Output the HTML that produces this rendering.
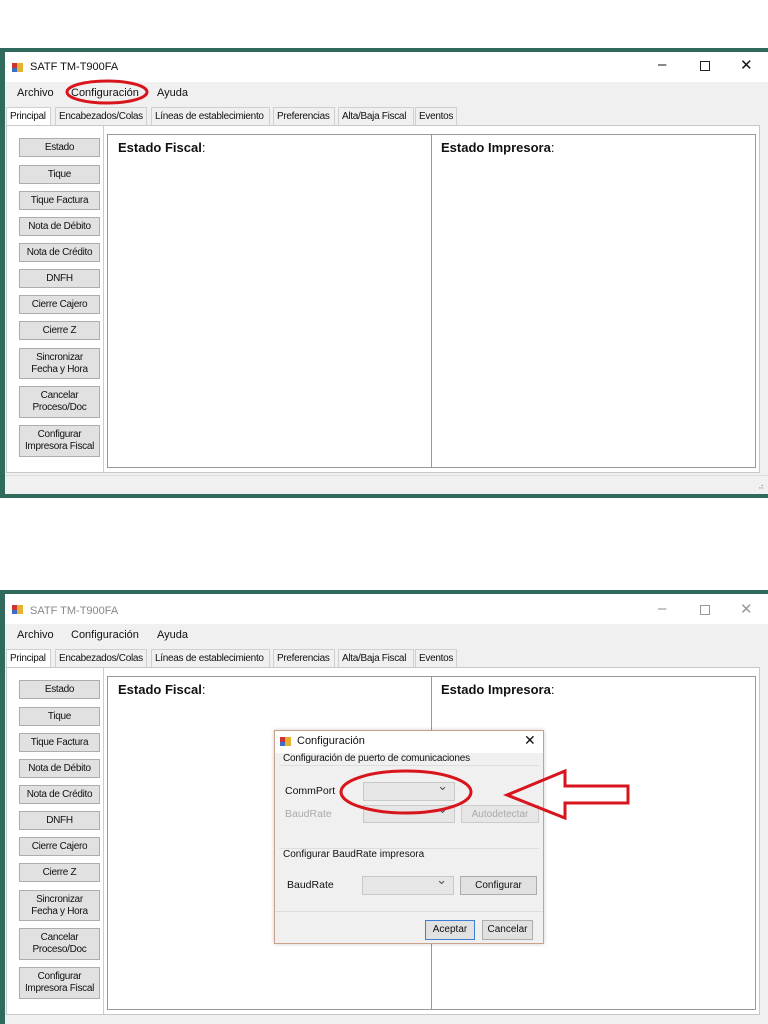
<!DOCTYPE html>
<html><head><meta charset="utf-8"><style>
*{margin:0;padding:0;box-sizing:border-box}
html{width:768px;height:1024px;overflow:hidden}
body{width:768px;height:1024px;background:#fff;position:relative;overflow:hidden;font-family:"Liberation Sans",sans-serif;font-size:10.5px;color:#111}
.a{position:absolute}
.win{position:absolute;left:0;width:768px;height:450px;background:#2f6a5c}
.in{position:absolute;left:5px;top:4px;right:0;bottom:4px;background:#f0f0f0}
.tb{position:absolute;left:0;top:0;right:0;height:30px;background:#fff}
.btn{position:absolute;left:14px;width:81px;background:#e1e1e1;border:1px solid #adadad;text-align:center;font-size:10px;line-height:12px;display:flex;align-items:center;justify-content:center;letter-spacing:-.3px}
.tab{position:absolute;top:0;height:18px;border:1px solid #d0d0d0;border-bottom:none;background:#f0f0f0;font-size:10px;line-height:17px;padding-left:3px;letter-spacing:-.3px}
.ico{position:absolute;width:11px;height:9px}
.ico i{position:absolute;display:block}
.cb{position:absolute;background:#e6e6e6;border:1px solid #c8c8c8}
.cb:after{content:"⌄";position:absolute;right:6px;top:-5px;font-size:13px;color:#555}
.db{position:absolute;background:#e1e1e1;border:1px solid #adadad;text-align:center;font-size:10px;line-height:17px}
</style></head><body>

<!-- window 1 -->
<div class="win" style="top:48px">
<div class="in">
 <div class="tb">
  <div class="ico" style="left:7px;top:11px"><i style="left:0;top:0;width:5px;height:5px;background:#c33"></i><i style="left:5px;top:0;width:6px;height:9px;background:#e8b030"></i><i style="left:0;top:5px;width:5px;height:4px;background:#3a6fc9"></i></div>
  <div class="a" style="left:25px;top:9px;font-size:11px">SATF TM-T900FA</div>
  <div class="a" style="left:653px;top:4px;font-size:15px">–</div>
  <div class="a" style="left:695px;top:9px;width:10px;height:10px;border:1px solid #222"></div>
  <div class="a" style="left:735px;top:4px;font-size:15px">✕</div>
 </div>
 <div class="a" style="left:12px;top:35px;font-size:11px">Archivo</div>
 <div class="a" style="left:66px;top:35px;font-size:11px">Configuración</div>
 <div class="a" style="left:152px;top:35px;font-size:11px">Ayuda</div>
 <div class="a" style="left:0;top:55px;width:760px;height:18px">
  <div class="tab" style="left:1px;background:#fff;height:19px;width:45px">Principal</div>
  <div class="tab" style="left:50px;width:92px">Encabezados/Colas</div>
  <div class="tab" style="left:146px;width:119px">Líneas de establecimiento</div>
  <div class="tab" style="left:268px;width:62px">Preferencias</div>
  <div class="tab" style="left:333px;width:76px">Alta/Baja Fiscal</div>
  <div class="tab" style="left:410px;width:42px">Eventos</div>
 </div>
 <div class="a" style="left:1px;top:73px;width:754px;height:348px;background:#fff;border:1px solid #c8c8c8"></div>
 <div class="a" style="left:98px;top:74px;width:1px;height:346px;background:#ccc"></div>
 <div class="a" style="left:102px;top:82px;width:649px;height:334px;background:#fff;border:1px solid #999"></div>
 <div class="a" style="left:426px;top:82px;width:1px;height:334px;background:#999"></div>
 <div class="a" style="left:113px;top:88px;font-size:13px;font-weight:bold">Estado Fiscal<span style="font-weight:normal">:</span></div>
 <div class="a" style="left:436px;top:88px;font-size:13px;font-weight:bold">Estado Impresora<span style="font-weight:normal">:</span></div>
 <div class="btn" style="top:86px;height:19px">Estado</div>
 <div class="btn" style="top:113px;height:19px">Tique</div>
 <div class="btn" style="top:139px;height:19px">Tique Factura</div>
 <div class="btn" style="top:165px;height:19px">Nota de Débito</div>
 <div class="btn" style="top:191px;height:19px">Nota de Crédito</div>
 <div class="btn" style="top:217px;height:19px">DNFH</div>
 <div class="btn" style="top:243px;height:19px">Cierre Cajero</div>
 <div class="btn" style="top:269px;height:19px">Cierre Z</div>
 <div class="btn" style="top:296px;height:31px">Sincronizar<br>Fecha y Hora</div>
 <div class="btn" style="top:334px;height:32px">Cancelar<br>Proceso/Doc</div>
 <div class="btn" style="top:373px;height:32px">Configurar<br>Impresora Fiscal</div>
 <div class="a" style="left:0;top:423px;right:0;height:1px;background:#ddd"></div>
 <div class="a" style="right:4px;top:430px;font-size:8px;color:#888">⠴</div>
</div>
<svg class="a" style="left:0;top:0" width="768" height="450"><ellipse cx="107" cy="44" rx="40" ry="11" fill="none" stroke="#d8141c" stroke-width="3"/></svg>
</div>

<!-- window 2 -->
<div class="win" style="top:590px;height:434px">
<div class="in" style="bottom:0">
 <div class="tb">
  <div class="ico" style="left:7px;top:11px"><i style="left:0;top:0;width:5px;height:5px;background:#c33"></i><i style="left:5px;top:0;width:6px;height:9px;background:#e8b030"></i><i style="left:0;top:5px;width:5px;height:4px;background:#3a6fc9"></i></div>
  <div class="a" style="left:25px;top:11px;font-size:11px;color:#888">SATF TM-T900FA</div>
  <div class="a" style="left:653px;top:6px;font-size:15px;color:#888">–</div>
  <div class="a" style="left:695px;top:11px;width:10px;height:10px;border:1px solid #999"></div>
  <div class="a" style="left:735px;top:6px;font-size:15px;color:#999">✕</div>
 </div>
 <div class="a" style="left:12px;top:35px;font-size:11px">Archivo</div>
 <div class="a" style="left:66px;top:35px;font-size:11px">Configuración</div>
 <div class="a" style="left:152px;top:35px;font-size:11px">Ayuda</div>
 <div class="a" style="left:0;top:55px;width:760px;height:18px">
  <div class="tab" style="left:1px;background:#fff;height:19px;width:45px">Principal</div>
  <div class="tab" style="left:50px;width:92px">Encabezados/Colas</div>
  <div class="tab" style="left:146px;width:119px">Líneas de establecimiento</div>
  <div class="tab" style="left:268px;width:62px">Preferencias</div>
  <div class="tab" style="left:333px;width:76px">Alta/Baja Fiscal</div>
  <div class="tab" style="left:410px;width:42px">Eventos</div>
 </div>
 <div class="a" style="left:1px;top:73px;width:754px;height:348px;background:#fff;border:1px solid #c8c8c8"></div>
 <div class="a" style="left:98px;top:74px;width:1px;height:346px;background:#ccc"></div>
 <div class="a" style="left:102px;top:82px;width:649px;height:334px;background:#fff;border:1px solid #999"></div>
 <div class="a" style="left:426px;top:82px;width:1px;height:334px;background:#999"></div>
 <div class="a" style="left:113px;top:88px;font-size:13px;font-weight:bold">Estado Fiscal<span style="font-weight:normal">:</span></div>
 <div class="a" style="left:436px;top:88px;font-size:13px;font-weight:bold">Estado Impresora<span style="font-weight:normal">:</span></div>
 <div class="btn" style="top:86px;height:19px">Estado</div>
 <div class="btn" style="top:113px;height:19px">Tique</div>
 <div class="btn" style="top:139px;height:19px">Tique Factura</div>
 <div class="btn" style="top:165px;height:19px">Nota de Débito</div>
 <div class="btn" style="top:191px;height:19px">Nota de Crédito</div>
 <div class="btn" style="top:217px;height:19px">DNFH</div>
 <div class="btn" style="top:243px;height:19px">Cierre Cajero</div>
 <div class="btn" style="top:269px;height:19px">Cierre Z</div>
 <div class="btn" style="top:296px;height:31px">Sincronizar<br>Fecha y Hora</div>
 <div class="btn" style="top:334px;height:32px">Cancelar<br>Proceso/Doc</div>
 <div class="btn" style="top:373px;height:32px">Configurar<br>Impresora Fiscal</div>
</div>
</div>

<!-- dialog -->
<div class="a" style="left:274px;top:730px;width:270px;height:214px;background:#f0f0f0;border:1px solid #c9a088;box-shadow:0 0 4px rgba(0,0,0,.2)">
 <div class="a" style="left:0;top:0;width:268px;height:22px;background:#fff"></div>
 <div class="ico" style="left:5px;top:6px"><i style="left:0;top:0;width:5px;height:5px;background:#c33"></i><i style="left:5px;top:0;width:6px;height:9px;background:#e8b030"></i><i style="left:0;top:5px;width:5px;height:4px;background:#3a6fc9"></i></div>
 <div class="a" style="left:22px;top:4px;font-size:11px">Configuración</div>
 <div class="a" style="left:249px;top:1px;font-size:14px">✕</div>
 <div class="a" style="left:8px;top:22px;font-size:10px;letter-spacing:-.2px">Configuración de puerto de comunicaciones</div>
 <div class="a" style="left:4px;top:34px;width:260px;height:1px;background:#ddd"></div>
 <div class="a" style="left:10px;top:54px;font-size:10.5px">CommPort</div>
 <div class="cb" style="left:88px;top:51px;width:92px;height:19px"></div>
 <div class="a" style="left:10px;top:77px;font-size:10.5px;color:#aaa">BaudRate</div>
 <div class="cb" style="left:88px;top:74px;width:92px;height:18px"></div>
 <div class="db" style="left:186px;top:74px;width:78px;height:18px;color:#aaa;background:#e6e6e6;border-color:#ccc">Autodetectar</div>
 <div class="a" style="left:4px;top:117px;width:260px;height:1px;background:#ddd"></div>
 <div class="a" style="left:8px;top:118px;font-size:10px">Configurar BaudRate impresora</div>
 <div class="a" style="left:12px;top:148px;font-size:10.5px">BaudRate</div>
 <div class="cb" style="left:87px;top:145px;width:92px;height:19px"></div>
 <div class="db" style="left:185px;top:145px;width:77px;height:19px">Configurar</div>
 <div class="a" style="left:0;top:180px;width:268px;height:1px;background:#ddd"></div>
 <div class="db" style="left:150px;top:189px;width:50px;height:20px;border:1px solid #3c7fd4">Aceptar</div>
 <div class="db" style="left:207px;top:189px;width:51px;height:20px">Cancelar</div>
</div>

<svg class="a" style="left:0;top:0" width="768" height="1024">
 <ellipse cx="406" cy="792" rx="65" ry="21" fill="none" stroke="#d8141c" stroke-width="3"/>
 <path d="M507 795 L565 771 L565 786 L628 786 L628 803 L565 803 L565 818 Z" fill="none" stroke="#d8141c" stroke-width="3" stroke-linejoin="miter"/>
</svg>
</body></html>
